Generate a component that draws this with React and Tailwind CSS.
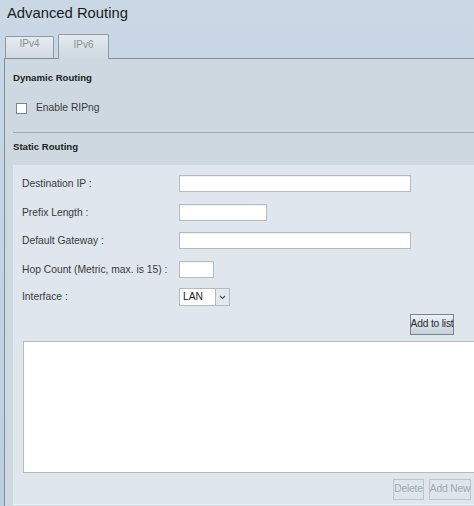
import React from 'react';

const font = "font-['Liberation_Sans',Arial,sans-serif]";

const Field = ({ label, width, mt }) => (
  <div className={`flex items-center h-[17px] ${mt}`}>
    <span className="w-[157px] text-[10.3px] text-[#3b3b3b]">{label}</span>
    <div className={`${width} h-[17px] bg-white border border-[#b3bbc3] shadow-[inset_0_1px_1px_rgba(0,0,0,0.06)]`}></div>
  </div>
);

const App = () => {
  return (
    <div className={`w-[474px] h-[506px] overflow-hidden bg-gradient-to-b from-[#cad8e6] to-[#bccfe1] ${font}`}>
      {/* Header */}
      <div className="h-[34px] pl-[7px] pt-[6px] text-[14.8px] leading-[15px] text-[#1b1b1b]">
        Advanced Routing
      </div>

      {/* Tabs */}
      <div className="h-[24px] flex items-end pl-[5px]">
        <div className="w-[49px] h-[22px] border border-b-0 border-[#8e9ba6] rounded-t-[2px] bg-gradient-to-b from-[#e6ebef] to-[#d2dbe2] text-center text-[10px] leading-[12px] pt-[1px] text-[#8a8f94]">
          IPv4
        </div>
        <div className="relative z-10 -mb-px ml-[4px] w-[51px] h-[25px] border border-b-0 border-[#8e9ba6] rounded-t-[2px] bg-gradient-to-b from-[#e4eaef] to-[#cdd8e0] text-center text-[10px] leading-[12px] pt-[4px] text-[#8a8f94]">
          IPv6
        </div>
      </div>

      {/* Panel */}
      <div className="ml-[4px] h-[448px] border-t border-l border-[#7d8d9a] bg-[#cdd8e0]">
        <div className="h-[38px] flex items-center pl-[8px] text-[9.6px] font-bold text-[#222]">
          Dynamic Routing
        </div>
        <div className="h-[22px] flex items-center pl-[11px]">
          <div className="w-[11px] h-[11px] bg-white border border-[#7c858d]"></div>
          <span className="ml-[9px] text-[10.3px] text-[#3b3b3b]">Enable RIPng</span>
        </div>
        <div className="h-[13px]"></div>
        <div className="ml-[8px] h-[33px] border-t border-[#a2acb5] flex items-center pb-[4px] text-[9.6px] font-bold text-[#222]">
          Static Routing
        </div>

        {/* Inner panel */}
        <div className="ml-[8px] h-[340px] bg-[#dfe6ed] border-b border-[#eef2f5] pt-[10px]">
          <div className="pl-[9px]">
            <Field label="Destination IP :" width="w-[232px]" mt="" />
            <Field label="Prefix Length :" width="w-[88px]" mt="mt-[12px]" />
            <Field label="Default Gateway :" width="w-[232px]" mt="mt-[11px]" />
            <Field label="Hop Count (Metric, max. is 15) :" width="w-[35px]" mt="mt-[12px]" />
            <div className="flex items-center h-[18px] mt-[10px]">
              <span className="w-[157px] text-[10.3px] text-[#3b3b3b]">Interface :</span>
              <div className="w-[51px] h-[18px] bg-white border border-[#b3bbc3] flex items-center">
                <span className="flex-1 pl-[3px] text-[10.3px] text-[#222]">LAN</span>
                <div className="w-[14px] h-[16px] border-l border-[#b3bbc3] bg-[#e4e9ed] flex items-center justify-center">
                  <svg width="7" height="5" viewBox="0 0 7 5">
                    <path d="M1 1 L3.5 3.5 L6 1" fill="none" stroke="#555" strokeWidth="1.2" />
                  </svg>
                </div>
              </div>
            </div>
          </div>

          <div className="flex justify-end pr-[20px] mt-[8px]">
            <button className="w-[44px] h-[21px] border border-[#77858f] bg-gradient-to-b from-[#eef1f4] to-[#c6d1da] text-[10.3px] text-[#2a2a2a] leading-none tracking-[-0.2px] whitespace-nowrap flex items-center justify-center">
              Add to list
            </button>
          </div>

          <div className="mt-[6px] ml-[10px] h-[132px] bg-white border-t border-l border-b border-[#b4bcc3]"></div>

          <div className="flex justify-end gap-[5px] pr-[3px] mt-[6px]">
            <button className="w-[31px] h-[21px] border border-[#bcc5cc] bg-[#dee5eb] text-[10.3px] text-[#a2a9af] leading-none tracking-[-0.2px] flex items-center justify-center">
              Delete
            </button>
            <button className="w-[42px] h-[21px] border border-[#bcc5cc] bg-[#dee5eb] text-[10.3px] text-[#a2a9af] leading-none tracking-[-0.2px] whitespace-nowrap flex items-center justify-center">
              Add New
            </button>
          </div>
        </div>
      </div>
    </div>
  );
};

export default App;
